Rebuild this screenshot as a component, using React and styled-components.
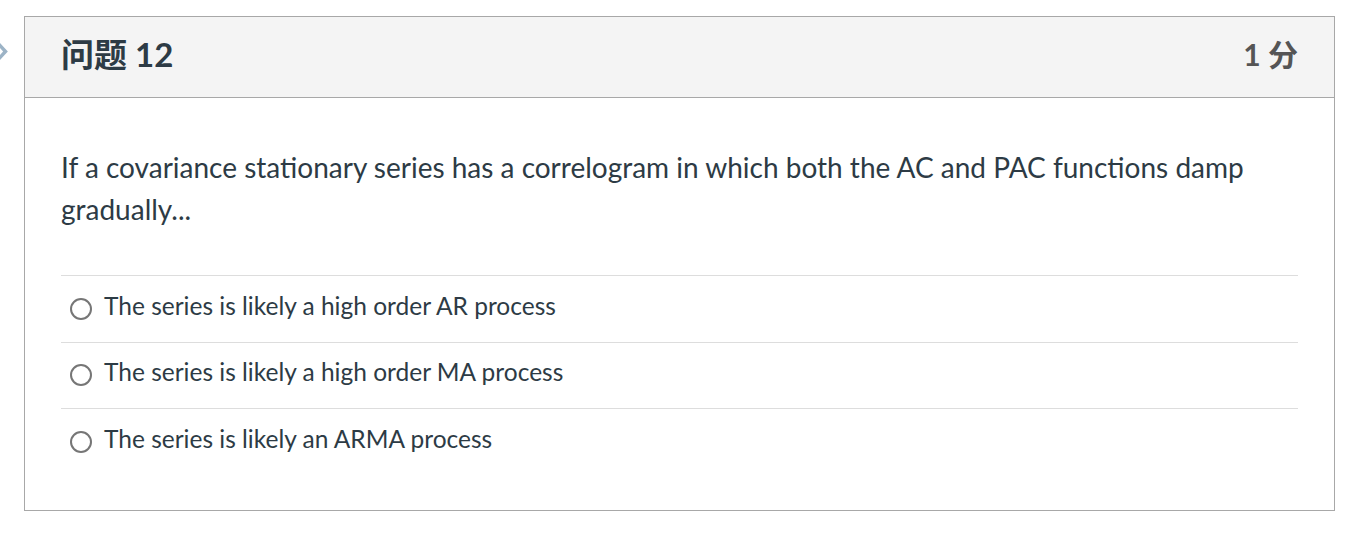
import React from "react";
import styled, { createGlobalStyle } from "styled-components";

const GlobalStyle = createGlobalStyle`
  html, body {
    margin: 0;
    padding: 0;
    background: #ffffff;
  }
  body {
    font-family: Lato, "Noto Sans CJK SC", sans-serif;
    color: #2d3b45;
  }
`;

const Page = styled.div`
  display: flex;
  align-items: flex-start;
  padding: 16px 0 0 0;
  width: 1372px;
  height: 550px;
  box-sizing: border-box;
  overflow: hidden;
`;

const Marker = styled.div`
  width: 24px;
  padding-top: 21px;
  margin-left: -10px;
  margin-right: 10px;
  flex-shrink: 0;
  svg {
    display: block;
  }
`;

const Card = styled.div`
  width: 1311px;
  height: 495px;
  box-sizing: border-box;
  border: 1px solid #a8a8a8;
  display: flex;
  flex-direction: column;
`;

const Header = styled.div`
  height: 81px;
  box-sizing: border-box;
  background: #f4f4f4;
  border-bottom: 1px solid #a8a8a8;
  display: flex;
  align-items: center;
  justify-content: space-between;
  padding: 0 36px 8px 36px;
`;

const Title = styled.h2`
  margin: 0;
  font-family: Lato, "Noto Sans CJK SC", sans-serif;
  font-size: 33px;
  font-weight: 700;
  color: #2d3b45;
`;

const Points = styled.div`
  font-family: Lato, "Noto Sans CJK SC", sans-serif;
  font-size: 30px;
  font-weight: 700;
  color: #555555;
`;

const Body = styled.div`
  padding: 48px 36px 0 36px;
`;

const Question = styled.p`
  margin: 0 0 45px 0;
  font-size: 28px;
  line-height: 42px;
  color: #2d3b45;
`;

const Answers = styled.div`
  display: flex;
  flex-direction: column;
`;

const Answer = styled.label`
  display: flex;
  align-items: center;
  height: 65.5px;
  border-top: 1px solid #dddddd;
  padding-left: 9px;
  gap: 12px;
  font-size: 24.5px;
  color: #2d3b45;
`;

const Radio = styled.span`
  display: block;
  width: 18px;
  height: 18px;
  border: 2px solid #767676;
  border-radius: 50%;
  flex-shrink: 0;
`;

const AnswerText = styled.span`
  padding-bottom: 7px;
`;

const answers = [
  "The series is likely a high order AR process",
  "The series is likely a high order MA process",
  "The series is likely an ARMA process",
];

export default function App() {
  return (
    <>
      <GlobalStyle />
      <Page>
        <Marker>
          <svg width="20" height="30" viewBox="0 0 20 30">
            <path
              d="M5 3 L15.5 14.5 L5 26"
              fill="none"
              stroke="#9cb3c6"
              strokeWidth="3.5"
            />
          </svg>
        </Marker>
        <Card>
          <Header>
            <Title>问题 12</Title>
            <Points>1 分</Points>
          </Header>
          <Body>
            <Question>
              If a covariance stationary series has a correlogram in which both
              the AC and PAC functions damp gradually...
            </Question>
            <Answers>
              {answers.map((a) => (
                <Answer key={a}>
                  <Radio />
                  <AnswerText>{a}</AnswerText>
                </Answer>
              ))}
            </Answers>
          </Body>
        </Card>
      </Page>
    </>
  );
}
